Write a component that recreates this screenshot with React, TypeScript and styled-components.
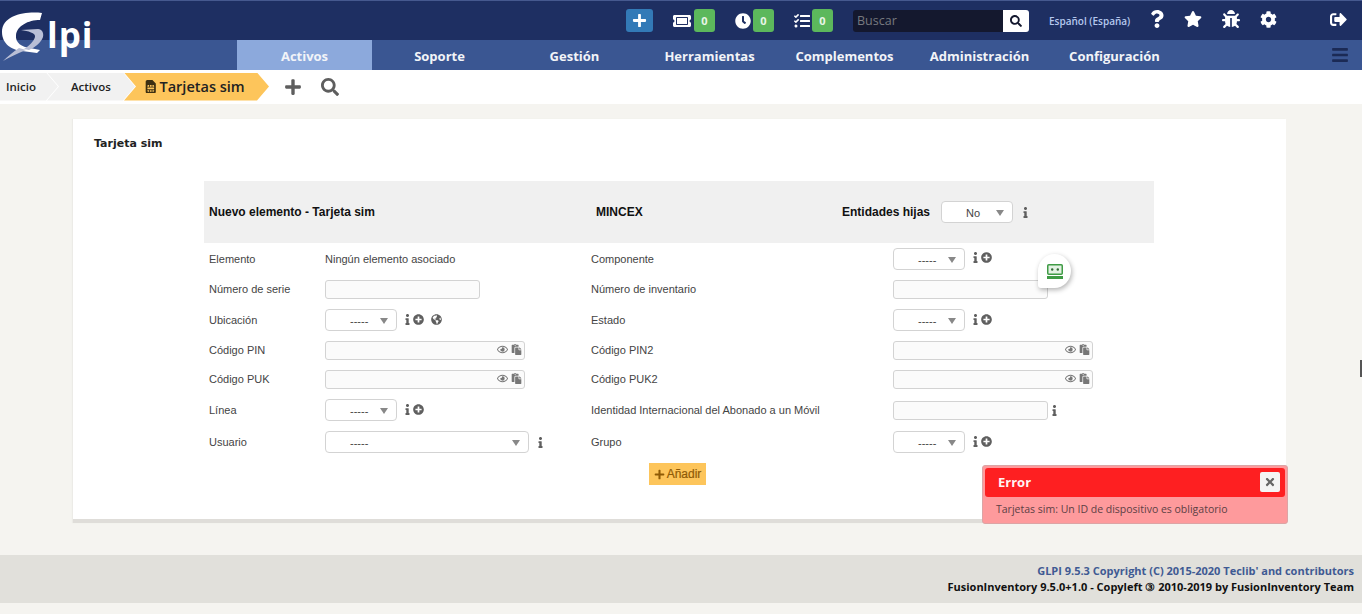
import React from "react";
import styled, { createGlobalStyle } from "styled-components";
import {
    FaBars,
    FaBug,
    FaClock,
    FaCog,
    FaGlobeAmericas,
    FaInfo,
    FaPaste,
    FaPlus,
    FaPlusCircle,
    FaQuestion,
    FaRegEye,
    FaSearch,
    FaSignOutAlt,
    FaSimCard,
    FaStar,
    FaTasks,
    FaTicketAlt,
    FaTimes,
} from "react-icons/fa";

const GlobalStyle = createGlobalStyle`
    html, body {
        margin: 0;
        padding: 0;
        height: 614px;
        overflow: hidden;
        background: #f5f4f0;
    }
    * {
        box-sizing: border-box;
    }
`;

const UI_FONT = `"Open Sans", "Noto Sans", sans-serif`;
const FORM_FONT = `"Liberation Sans", Arial, sans-serif`;

const Page = styled.div`
    position: relative;
    width: 1362px;
    height: 614px;
    font-family: ${FORM_FONT};
`;

const Header = styled.header`
    position: relative;
`;

const LogoBox = styled.div`
    position: absolute;
    left: 0;
    top: 0;
    width: 100px;
    height: 70px;
`;

const LogoText = styled.span`
    position: absolute;
    left: 47px;
    top: 11px;
    font-family: "Open Sans", sans-serif;
    font-weight: 700;
    font-size: 35px;
    line-height: 48px;
    letter-spacing: 1px;
    color: #fff;
`;

const TopBar = styled.div`
    height: 40px;
    background: #1e2f62;
    border-top: 1px solid #46598f;
    display: flex;
    align-items: center;
    padding-left: 626px;
    color: #fff;
`;

const AddButton = styled.div`
    width: 27px;
    height: 23px;
    background: #337ab7;
    border-radius: 3px;
    display: flex;
    align-items: center;
    justify-content: center;
    font-size: 15px;
    margin-right: 20px;
`;

const Counter = styled.div<{ $iconGap: number; $size: number }>`
    display: flex;
    align-items: center;
    font-size: ${(props) => props.$size}px;
    margin-right: 20px;
    gap: ${(props) => props.$iconGap}px;
`;

const Badge = styled.span`
    width: 21px;
    height: 23px;
    background: #5cb85c;
    border-radius: 3px;
    display: flex;
    align-items: center;
    justify-content: center;
    font-family: ${UI_FONT};
    font-weight: 700;
    font-size: 11px;
    color: #e8f5e8;
`;

const SearchBox = styled.div`
    display: flex;
    height: 22px;
    width: 176px;
    margin-right: 20px;
`;

const SearchField = styled.div`
    width: 150px;
    background: #14182e;
    border-radius: 3px 0 0 3px;
    color: #77797f;
    font-family: ${UI_FONT};
    font-size: 12.5px;
    line-height: 22px;
    padding-left: 4px;
`;

const SearchButton = styled.div`
    width: 26px;
    background: #fff;
    border-radius: 0 3px 3px 0;
    color: #14182e;
    display: flex;
    align-items: center;
    justify-content: center;
    font-size: 12px;
`;

const Language = styled.span`
    width: 99px;
    font-family: ${UI_FONT};
    font-weight: 600;
    font-size: 10px;
    color: #b5c8ee;
    white-space: nowrap;
`;

const TopIcon = styled.span<{ $width: number; $size?: number }>`
    width: ${(props) => props.$width}px;
    font-size: ${(props) => props.$size ?? 18}px;
    display: flex;
    align-items: center;
    margin-top: -3px;
`;

const NavBar = styled.nav`
    height: 30px;
    background: #3a5692;
    display: flex;
    padding-left: 237px;
    position: relative;
`;

const NavItem = styled.a<{ $active?: boolean }>`
    width: 135px;
    height: 30px;
    background: ${(props) => (props.$active ? "#8ca9dc" : "transparent")};
    color: #f2f4f8;
    font-family: ${UI_FONT};
    font-weight: 700;
    font-size: 13px;
    line-height: 33px;
    text-align: center;
    white-space: nowrap;
`;

const NavMenu = styled.span`
    position: absolute;
    left: 1331px;
    top: 6px;
    font-size: 18px;
    color: #1b2a55;
    display: flex;
`;

const CrumbBar = styled.div`
    height: 34px;
    background: #fff;
    display: flex;
    align-items: center;
    padding-bottom: 1px;
`;

const Crumb = styled.div<{ $width: number; $current?: boolean; $first?: boolean }>`
    width: ${(props) => props.$width}px;
    height: 28px;
    margin-right: -11px;
    display: flex;
    align-items: center;
    gap: 2px;
    padding-left: ${(props) => (props.$first ? 6 : props.$current ? 20 : 24)}px;
    background: ${(props) => (props.$current ? "#fdc55b" : "#f1f1f1")};
    clip-path: polygon(
        0 0,
        calc(100% - 12px) 0,
        100% 50%,
        calc(100% - 12px) 100%,
        0 100%,
        ${(props) => (props.$first ? "0 50%" : "12px 50%")}
    );
    font-family: ${UI_FONT};
    font-weight: 600;
    font-size: ${(props) => (props.$current ? 14.5 : 11.5)}px;
    color: #222;
    white-space: nowrap;
    svg {
        font-size: 13.5px;
        color: #3c2f12;
    }
`;

const CrumbAction = styled.span<{ $left: number }>`
    margin-left: ${(props) => props.$left}px;
    color: #5e5e5e;
    font-size: 18px;
    display: flex;
`;

const Main = styled.main`
    padding: 15px 76px 32px 73px;
`;

const Card = styled.section`
    height: 404px;
    background: #fff;
    border-bottom: 4px solid #dfddd9;
    box-shadow: -1px 0 1px #ecebe7;
    padding: 18px 0 0 21px;
`;

const CardTitle = styled.h2`
    margin: 0 0 31px;
    font-family: "DejaVu Sans", Verdana, sans-serif;
    font-weight: 700;
    font-size: 11px;
    line-height: 13px;
    color: #222;
`;

const FormTable = styled.div`
    width: 950px;
    margin-left: 110px;
    font-size: 11px;
    color: #444;
`;

const FormHead = styled.div`
    height: 62px;
    background: #f0f0f0;
    display: grid;
    grid-template-columns: 387px 246px 1fr;
    align-items: center;
    padding-left: 5px;
    font-size: 12px;
    font-weight: 700;
    color: #111;
`;

const HeadEnd = styled.div`
    display: flex;
    align-items: center;
    gap: 9px;
`;

const HeadLabel = styled.span`
    margin-right: 2px;
`;

const Row = styled.div<{ $height: number }>`
    height: ${(props) => props.$height}px;
    display: grid;
    grid-template-columns: 116px 266px 302px 1fr;
    align-items: center;
    padding-left: 5px;
`;

const Label = styled.span`
    white-space: nowrap;
`;

const Field = styled.div<{ $gap?: number }>`
    display: flex;
    align-items: center;
    gap: ${(props) => props.$gap ?? 7}px;
`;

const TextInput = styled.div<{ $width: number }>`
    width: ${(props) => props.$width}px;
    height: 19px;
    background: #fbfbfb;
    border: 1px solid #d3d3d3;
    border-radius: 3px;
    display: flex;
    align-items: center;
    justify-content: flex-end;
    gap: 3px;
    padding: 0 2px 2px 0;
    color: #777;
    font-size: 11px;
`;

const SelectBox = styled.div<{ $width: number }>`
    position: relative;
    width: ${(props) => props.$width}px;
    height: 22px;
    background: #fff;
    border: 1px solid #d3d3d3;
    border-radius: 4px;
    padding-left: 24px;
    line-height: 22px;
    font-size: 11px;
    font-weight: 400;
    color: #444;
    &::after {
        content: "";
        position: absolute;
        right: 8px;
        top: 8px;
        border-left: 4.5px solid transparent;
        border-right: 4.5px solid transparent;
        border-top: 6px solid #888;
    }
`;

const IconGroup = styled.span`
    display: inline-flex;
    align-items: center;
    gap: 2px;
    color: #5f5f5f;
    font-size: 11px;
    margin-top: -2px;
`;

const InfoIcon = styled(FaInfo)`
    font-size: 11px;
    width: 7px;
    color: #5f5f5f;
`;

const FormActions = styled.div`
    display: flex;
    justify-content: center;
    padding: 5px 3px 0 0;
`;

const SubmitButton = styled.button`
    height: 22px;
    width: 57px;
    border: 0;
    padding: 0;
    background: #fdc55b;
    color: #8f5a06;
    font-family: ${FORM_FONT};
    font-size: 12px;
    font-weight: 400;
    -webkit-text-stroke: 0.2px #8f5a06;
    display: flex;
    align-items: center;
    justify-content: center;
    gap: 2px;
    svg {
        font-size: 11px;
    }
`;

const FloatBadge = styled.div`
    position: absolute;
    left: 1038px;
    top: 254px;
    width: 33px;
    height: 34px;
    background: #fff;
    border-radius: 50% 50% 50% 3px;
    box-shadow: 1px 2px 5px rgba(0, 0, 0, 0.3);
    display: flex;
    align-items: center;
    justify-content: center;
`;

const EdgeMark = styled.div`
    position: absolute;
    left: 1360px;
    top: 360px;
    width: 2px;
    height: 17px;
    background: #555;
`;

const Toast = styled.aside`
    position: absolute;
    left: 982px;
    top: 465px;
    width: 306px;
    height: 59px;
    background: #fe9a9c;
    border: 1px solid #dca4a5;
    border-radius: 3px;
    padding: 2px;
`;

const ToastTitle = styled.div`
    height: 29px;
    background: #fe1f21;
    border-radius: 3px;
    display: flex;
    align-items: center;
    justify-content: space-between;
    padding: 0 5px 2px 13px;
    font-family: ${UI_FONT};
    font-weight: 700;
    font-size: 13px;
    color: #fff2f2;
`;

const ToastClose = styled.span`
    width: 20px;
    height: 20px;
    background: #f4f4f4;
    border-radius: 2px;
    color: #666;
    font-size: 12px;
    display: flex;
    align-items: center;
    justify-content: center;
`;

const ToastText = styled.p`
    margin: 0;
    padding: 5px 0 0 11px;
    font-family: ${UI_FONT};
    font-size: 10.5px;
    line-height: 14px;
    color: #5c4044;
    white-space: nowrap;
`;

const Footer = styled.footer`
    height: 48px;
    background: #e1e0db;
    text-align: right;
    padding: 8px 8px 0 0;
    font-family: ${UI_FONT};
    font-weight: 700;
    font-size: 11px;
    line-height: 16px;
    color: #111;
`;

const FooterLink = styled.div`
    color: #3f5a93;
`;

const navItems = ["Activos", "Soporte", "Gestión", "Herramientas", "Complementos", "Administración", "Configuración"];

const Select: React.FC<{ width: number; value?: string }> = ({ width, value = "-----" }) => (
    <SelectBox $width={width}>{value}</SelectBox>
);

const Secret: React.FC = () => (
    <TextInput $width={200}>
        <FaRegEye />
        <FaPaste />
    </TextInput>
);

const InfoPlus: React.FC = () => (
    <IconGroup>
        <InfoIcon />
        <FaPlusCircle />
    </IconGroup>
);

const Logo: React.FC = () => (
    <LogoBox>
        <svg width="48" height="64" viewBox="0 0 48 64">
            <path
                d="M42 13 C26 11 2 15 2 32 C2 44 12 50 22 51 L37 53 L40 50 L30 48 C22 47 15 43 16 35 C17 26 28 20 40 20 Z"
                fill="#fff"
            />
            <path d="M21 30 L38 29 C42 29 44 33 43 37 C41 43 34 48 29 50 L24 49 C29 46 34 41 35 37 C36 33 28 31 21 30 Z" fill="#b9bfd6" />
            <path d="M19 48 L26 50 C18 53 10 57 3 61 C8 56 13 52 19 48 Z" fill="#b9bfd6" />
        </svg>
        <LogoText>lpi</LogoText>
    </LogoBox>
);

const App: React.FC = () => {
    return (
        <Page>
            <GlobalStyle />
            <Header>
                <TopBar>
                    <AddButton>
                        <FaPlus />
                    </AddButton>
                    <Counter $iconGap={3} $size={18}>
                        <FaTicketAlt />
                        <Badge>0</Badge>
                    </Counter>
                    <Counter $iconGap={2} $size={16}>
                        <FaClock />
                        <Badge>0</Badge>
                    </Counter>
                    <Counter $iconGap={2} $size={16}>
                        <FaTasks />
                        <Badge>0</Badge>
                    </Counter>
                    <SearchBox>
                        <SearchField>Buscar</SearchField>
                        <SearchButton>
                            <FaSearch />
                        </SearchButton>
                    </SearchBox>
                    <Language>Español (España)</Language>
                    <TopIcon $width={36}>
                        <FaQuestion />
                    </TopIcon>
                    <TopIcon $width={38}>
                        <FaStar />
                    </TopIcon>
                    <TopIcon $width={38}>
                        <FaBug />
                    </TopIcon>
                    <TopIcon $width={70} $size={17}>
                        <FaCog />
                    </TopIcon>
                    <TopIcon $width={18} $size={17}>
                        <FaSignOutAlt />
                    </TopIcon>
                </TopBar>
                <NavBar>
                    {navItems.map((item) => (
                        <NavItem key={item} $active={item === "Activos"}>
                            {item}
                        </NavItem>
                    ))}
                    <NavMenu>
                        <FaBars />
                    </NavMenu>
                </NavBar>
                <Logo />
                <CrumbBar>
                    <Crumb $first $width={58}>
                        Inicio
                    </Crumb>
                    <Crumb $width={88}>Activos</Crumb>
                    <Crumb $current $width={145}>
                        <FaSimCard />
                        Tarjetas sim
                    </Crumb>
                    <CrumbAction $left={26}>
                        <FaPlus />
                    </CrumbAction>
                    <CrumbAction $left={19}>
                        <FaSearch />
                    </CrumbAction>
                </CrumbBar>
            </Header>
            <Main>
                <Card>
                    <CardTitle>Tarjeta sim</CardTitle>
                    <FormTable>
                        <FormHead>
                            <span>Nuevo elemento - Tarjeta sim</span>
                            <span>MINCEX</span>
                            <HeadEnd>
                                <HeadLabel>Entidades hijas</HeadLabel>
                                <Select width={72} value="No" />
                                <InfoIcon />
                            </HeadEnd>
                        </FormHead>
                        <Row $height={31}>
                            <Label>Elemento</Label>
                            <Label>Ningún elemento asociado</Label>
                            <Label>Componente</Label>
                            <Field>
                                <Select width={72} />
                                <InfoPlus />
                            </Field>
                        </Row>
                        <Row $height={30}>
                            <Label>Número de serie</Label>
                            <Field>
                                <TextInput $width={155} />
                            </Field>
                            <Label>Número de inventario</Label>
                            <Field>
                                <TextInput $width={155} />
                            </Field>
                        </Row>
                        <Row $height={32}>
                            <Label>Ubicación</Label>
                            <Field>
                                <Select width={72} />
                                <InfoPlus />
                                <IconGroup>
                                    <FaGlobeAmericas />
                                </IconGroup>
                            </Field>
                            <Label>Estado</Label>
                            <Field>
                                <Select width={72} />
                                <InfoPlus />
                            </Field>
                        </Row>
                        <Row $height={28}>
                            <Label>Código PIN</Label>
                            <Field>
                                <Secret />
                            </Field>
                            <Label>Código PIN2</Label>
                            <Field>
                                <Secret />
                            </Field>
                        </Row>
                        <Row $height={30}>
                            <Label>Código PUK</Label>
                            <Field>
                                <Secret />
                            </Field>
                            <Label>Código PUK2</Label>
                            <Field>
                                <Secret />
                            </Field>
                        </Row>
                        <Row $height={32}>
                            <Label>Línea</Label>
                            <Field>
                                <Select width={72} />
                                <InfoPlus />
                            </Field>
                            <Label>Identidad Internacional del Abonado a un Móvil</Label>
                            <Field $gap={3}>
                                <TextInput $width={155} />
                                <InfoIcon />
                            </Field>
                        </Row>
                        <Row $height={32}>
                            <Label>Usuario</Label>
                            <Field $gap={8}>
                                <Select width={204} />
                                <InfoIcon />
                            </Field>
                            <Label>Grupo</Label>
                            <Field>
                                <Select width={72} />
                                <InfoPlus />
                            </Field>
                        </Row>
                        <FormActions>
                            <SubmitButton>
                                <FaPlus />
                                Añadir
                            </SubmitButton>
                        </FormActions>
                    </FormTable>
                </Card>
            </Main>
            <Footer>
                <FooterLink>GLPI 9.5.3 Copyright (C) 2015-2020 Teclib' and contributors</FooterLink>
                <div>FusionInventory 9.5.0+1.0 - Copyleft ③ 2010-2019 by FusionInventory Team</div>
            </Footer>
            <FloatBadge>
                <svg width="16" height="15" viewBox="0 0 16 15">
                    <rect x="0.75" y="0.75" width="14.5" height="9.5" rx="1" fill="#e3f1e3" stroke="#3f9b45" strokeWidth="1.5" />
                    <circle cx="5.2" cy="5.5" r="1.2" fill="#2f6b33" />
                    <circle cx="10.8" cy="5.5" r="1.2" fill="#2f6b33" />
                    <rect x="0" y="12" width="16" height="3" fill="#3f9b45" />
                </svg>
            </FloatBadge>
            <EdgeMark />
            <Toast>
                <ToastTitle>
                    Error
                    <ToastClose>
                        <FaTimes />
                    </ToastClose>
                </ToastTitle>
                <ToastText>Tarjetas sim: Un ID de dispositivo es obligatorio</ToastText>
            </Toast>
        </Page>
    );
};

export default App;
